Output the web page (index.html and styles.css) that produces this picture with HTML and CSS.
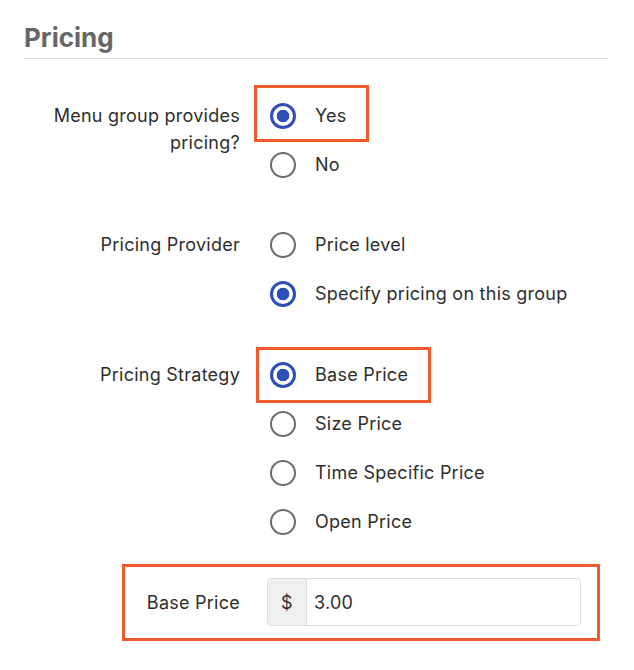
FILE: index.html
```html
<!DOCTYPE html>
<html lang="en">
<head>
<meta charset="utf-8">
<title>Pricing</title>
<link rel="stylesheet" href="styles.css">
</head>
<body>
<div class="page">
  <h2 class="title">Pricing</h2>

  <div class="group group-first">
    <div class="label">Menu group provides pricing?</div>
    <div class="options">
      <label class="option">
        <input type="radio" name="provides" checked>
        <span>Yes</span>
        <span class="hl hl-yes"></span>
      </label>
      <label class="option">
        <input type="radio" name="provides">
        <span>No</span>
      </label>
    </div>
  </div>

  <div class="group">
    <div class="label">Pricing Provider</div>
    <div class="options">
      <label class="option">
        <input type="radio" name="provider">
        <span>Price level</span>
      </label>
      <label class="option">
        <input type="radio" name="provider" checked>
        <span>Specify pricing on this group</span>
      </label>
    </div>
  </div>

  <div class="group group-strategy">
    <div class="label">Pricing Strategy</div>
    <div class="options">
      <label class="option">
        <input type="radio" name="strategy" checked>
        <span>Base Price</span>
        <span class="hl hl-base"></span>
      </label>
      <label class="option">
        <input type="radio" name="strategy">
        <span>Size Price</span>
      </label>
      <label class="option">
        <input type="radio" name="strategy">
        <span>Time Specific Price</span>
      </label>
      <label class="option">
        <input type="radio" name="strategy">
        <span>Open Price</span>
      </label>
    </div>
  </div>

  <div class="field-box">
    <div class="field-label">Base Price</div>
    <div class="input-group">
      <span class="addon">$</span>
      <input class="text-input" type="text" value="3.00">
    </div>
  </div>
</div>
</body>
</html>
```

FILE: styles.css
```css
* { box-sizing: border-box; }

html, body {
  margin: 0;
  padding: 0;
  background: #ffffff;
}

body {
  font-family: Inter, "Liberation Sans", Arial, sans-serif;
  font-size: 18px;
  letter-spacing: 0.25px;
  color: #2e2e2e;
}

.page {
  margin-left: 24px;
  width: 584px;
}

.title {
  margin: 0;
  padding-top: 22px;
  padding-bottom: 4px;
  font-size: 26px;
  line-height: 32px;
  font-weight: 700;
  letter-spacing: 0;
  color: #666666;
  border-bottom: 1px solid #dddddd;
}

.group {
  display: grid;
  grid-template-columns: 216px 1fr;
  column-gap: 30px;
  margin-top: 31px;
}

.group-first {
  margin-top: 32px;
}

.group-strategy {
  margin-top: 32px;
}

.label {
  text-align: right;
  padding-top: 11px;
  line-height: 27px;
}

.options {
  display: flex;
  flex-direction: column;
}

.option {
  position: relative;
  display: flex;
  align-items: center;
  gap: 19px;
  height: 49px;
  line-height: 27px;
}

.option input {
  appearance: none;
  -webkit-appearance: none;
  margin: 0;
  width: 26px;
  height: 26px;
  flex: 0 0 26px;
  border: 2px solid #6c6c6c;
  border-radius: 50%;
  background: #ffffff;
}

.option input:checked {
  border: 3px solid #2e4fb7;
  background: radial-gradient(circle, #2e4fb7 0 6px, #ffffff 6.6px);
}

.hl {
  position: absolute;
  border: 3px solid #ef5a2a;
  pointer-events: none;
}

.hl-yes {
  left: -16px;
  top: -6px;
  width: 115px;
  height: 57px;
}

.hl-base {
  left: -14px;
  top: -3px;
  width: 175px;
  height: 56px;
}

.field-box {
  display: grid;
  grid-template-columns: 115px 1fr;
  column-gap: 27px;
  align-items: center;
  margin-top: 18px;
  margin-left: 98px;
  width: 478px;
  padding: 11px 16px 12px 0;
  border: 3px solid #ef5a2a;
}

.field-label {
  text-align: right;
}

.input-group {
  display: flex;
  height: 48px;
  border: 1px solid #dcdcdc;
  border-radius: 4px;
  overflow: hidden;
}

.addon {
  display: flex;
  align-items: center;
  justify-content: center;
  flex: 0 0 39px;
  width: 39px;
  background: #f0f0f0;
  border-right: 1px solid #dcdcdc;
  color: #2e2e2e;
}

.text-input {
  flex: 1 1 auto;
  min-width: 0;
  width: 100%;
  border: 0;
  margin: 0;
  padding: 0 7px;
  font: inherit;
  letter-spacing: inherit;
  color: #2e2e2e;
  background: #ffffff;
  outline: none;
}
```
